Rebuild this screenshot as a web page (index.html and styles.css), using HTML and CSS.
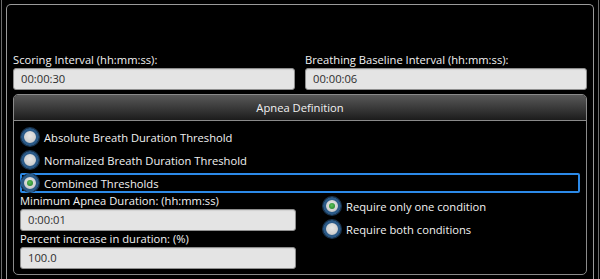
FILE: index.html
```html
<!DOCTYPE html>
<html>
<head>
<meta charset="utf-8">
<link rel="stylesheet" href="styles.css">
</head>
<body>
<div class="shell">
  <div class="frame">
    <div class="fields">
      <div class="field">
        <div class="label">Scoring Interval (hh:mm:ss):</div>
        <div class="input">00:00:30</div>
      </div>
      <div class="field">
        <div class="label">Breathing Baseline Interval (hh:mm:ss):</div>
        <div class="input">00:00:06</div>
      </div>
    </div>
    <div class="group">
      <div class="group-header">Apnea Definition</div>
      <div class="group-body">
        <div class="choices">
          <div class="radio-row"><span class="radio"></span><span>Absolute Breath Duration Threshold</span></div>
          <div class="radio-row"><span class="radio"></span><span>Normalized Breath Duration Threshold</span></div>
          <div class="radio-row selected"><span class="radio checked"></span><span>Combined Thresholds</span></div>
        </div>
        <div class="bottom">
          <div class="bottom-left">
            <div class="label">Minimum Apnea Duration: (hh:mm:ss)</div>
            <div class="input">0:00:01</div>
            <div class="label">Percent increase in duration: (%)</div>
            <div class="input">100.0</div>
          </div>
          <div class="bottom-right">
            <div class="radio-row"><span class="radio checked"></span><span>Require only one condition</span></div>
            <div class="radio-row"><span class="radio"></span><span>Require both conditions</span></div>
          </div>
        </div>
      </div>
    </div>
  </div>
</div>
</body>
</html>
```
FILE: styles.css
```css
html, body {
  margin: 0;
  padding: 0;
  background: #000;
}
body {
  width: 600px;
  height: 279px;
  overflow: hidden;
  font-family: "Open Sans", "Noto Sans", sans-serif;
  font-size: 11.2px;
  color: #f2f2f2;
}
.shell {
  margin-left: 1px;
  width: 598px;
  height: 279px;
  box-sizing: border-box;
  border-left: 1px solid #6c6c6c;
  border-right: 1px solid #6c6c6c;
  padding: 4px 3px 0 4px;
}
.frame {
  width: 588px;
  height: 275px;
  border: 1px solid #9a9a9a;
  border-bottom: none;
  border-radius: 5px 5px 0 0;
  padding: 47px 6px 0 6px;
  box-sizing: border-box;
}
.fields {
  display: grid;
  grid-template-columns: 282px 282px;
  column-gap: 10px;
}
.label {
  line-height: 16px;
  height: 16px;
  white-space: nowrap;
}
.input {
  height: 20px;
  line-height: 20px;
  background: #e4e4e4;
  border: 1px solid #8e8e8e;
  border-radius: 3px;
  color: #2e2e2e;
  padding-left: 7px;
  box-shadow: inset 0 1px 1px rgba(0,0,0,0.08);
}
.group {
  margin-top: 4px;
  width: 574px;
  height: 181px;
  box-sizing: border-box;
  border: 1px solid #8a8a8a;
  border-radius: 5px;
  overflow: hidden;
}
.group-header {
  height: 26px;
  line-height: 25px;
  text-align: center;
  background: linear-gradient(#595959, #1c1c1c);
  border-bottom: 1px solid #8a8a8a;
  box-sizing: border-box;
}
.group-body {
  padding: 6px 6px 0 6px;
}
.choices {
  display: flex;
  flex-direction: column;
  gap: 3px;
}
.radio-row {
  display: flex;
  align-items: center;
  gap: 5px;
  height: 20px;
  box-sizing: border-box;
  border: 2px solid transparent;
  border-radius: 2px;
  white-space: nowrap;
}
.radio-row.selected {
  border-color: #2c8ae8;
  width: 560px;
}
.radio {
  width: 18px;
  height: 18px;
  margin-left: -1px;
  box-sizing: border-box;
  border-radius: 50%;
  border: 3px solid #2b5a88;
  background: radial-gradient(circle at 50% 40%, #e6e6e6 0%, #d2d2d2 60%, #b4b4b4 100%);
  box-shadow: 0 0 0 1px #1a3550;
  position: relative;
  flex: none;
}
.radio.checked::after {
  content: "";
  position: absolute;
  left: 3px;
  top: 3px;
  width: 6px;
  height: 6px;
  border-radius: 50%;
  background: radial-gradient(circle at 45% 40%, #5cc05c, #1d7a25);
}
.bottom {
  display: grid;
  grid-template-columns: 276px 1fr;
}
.bottom-right {
  padding-left: 26px;
  padding-top: 3px;
  display: flex;
  flex-direction: column;
  gap: 3px;
}
```
